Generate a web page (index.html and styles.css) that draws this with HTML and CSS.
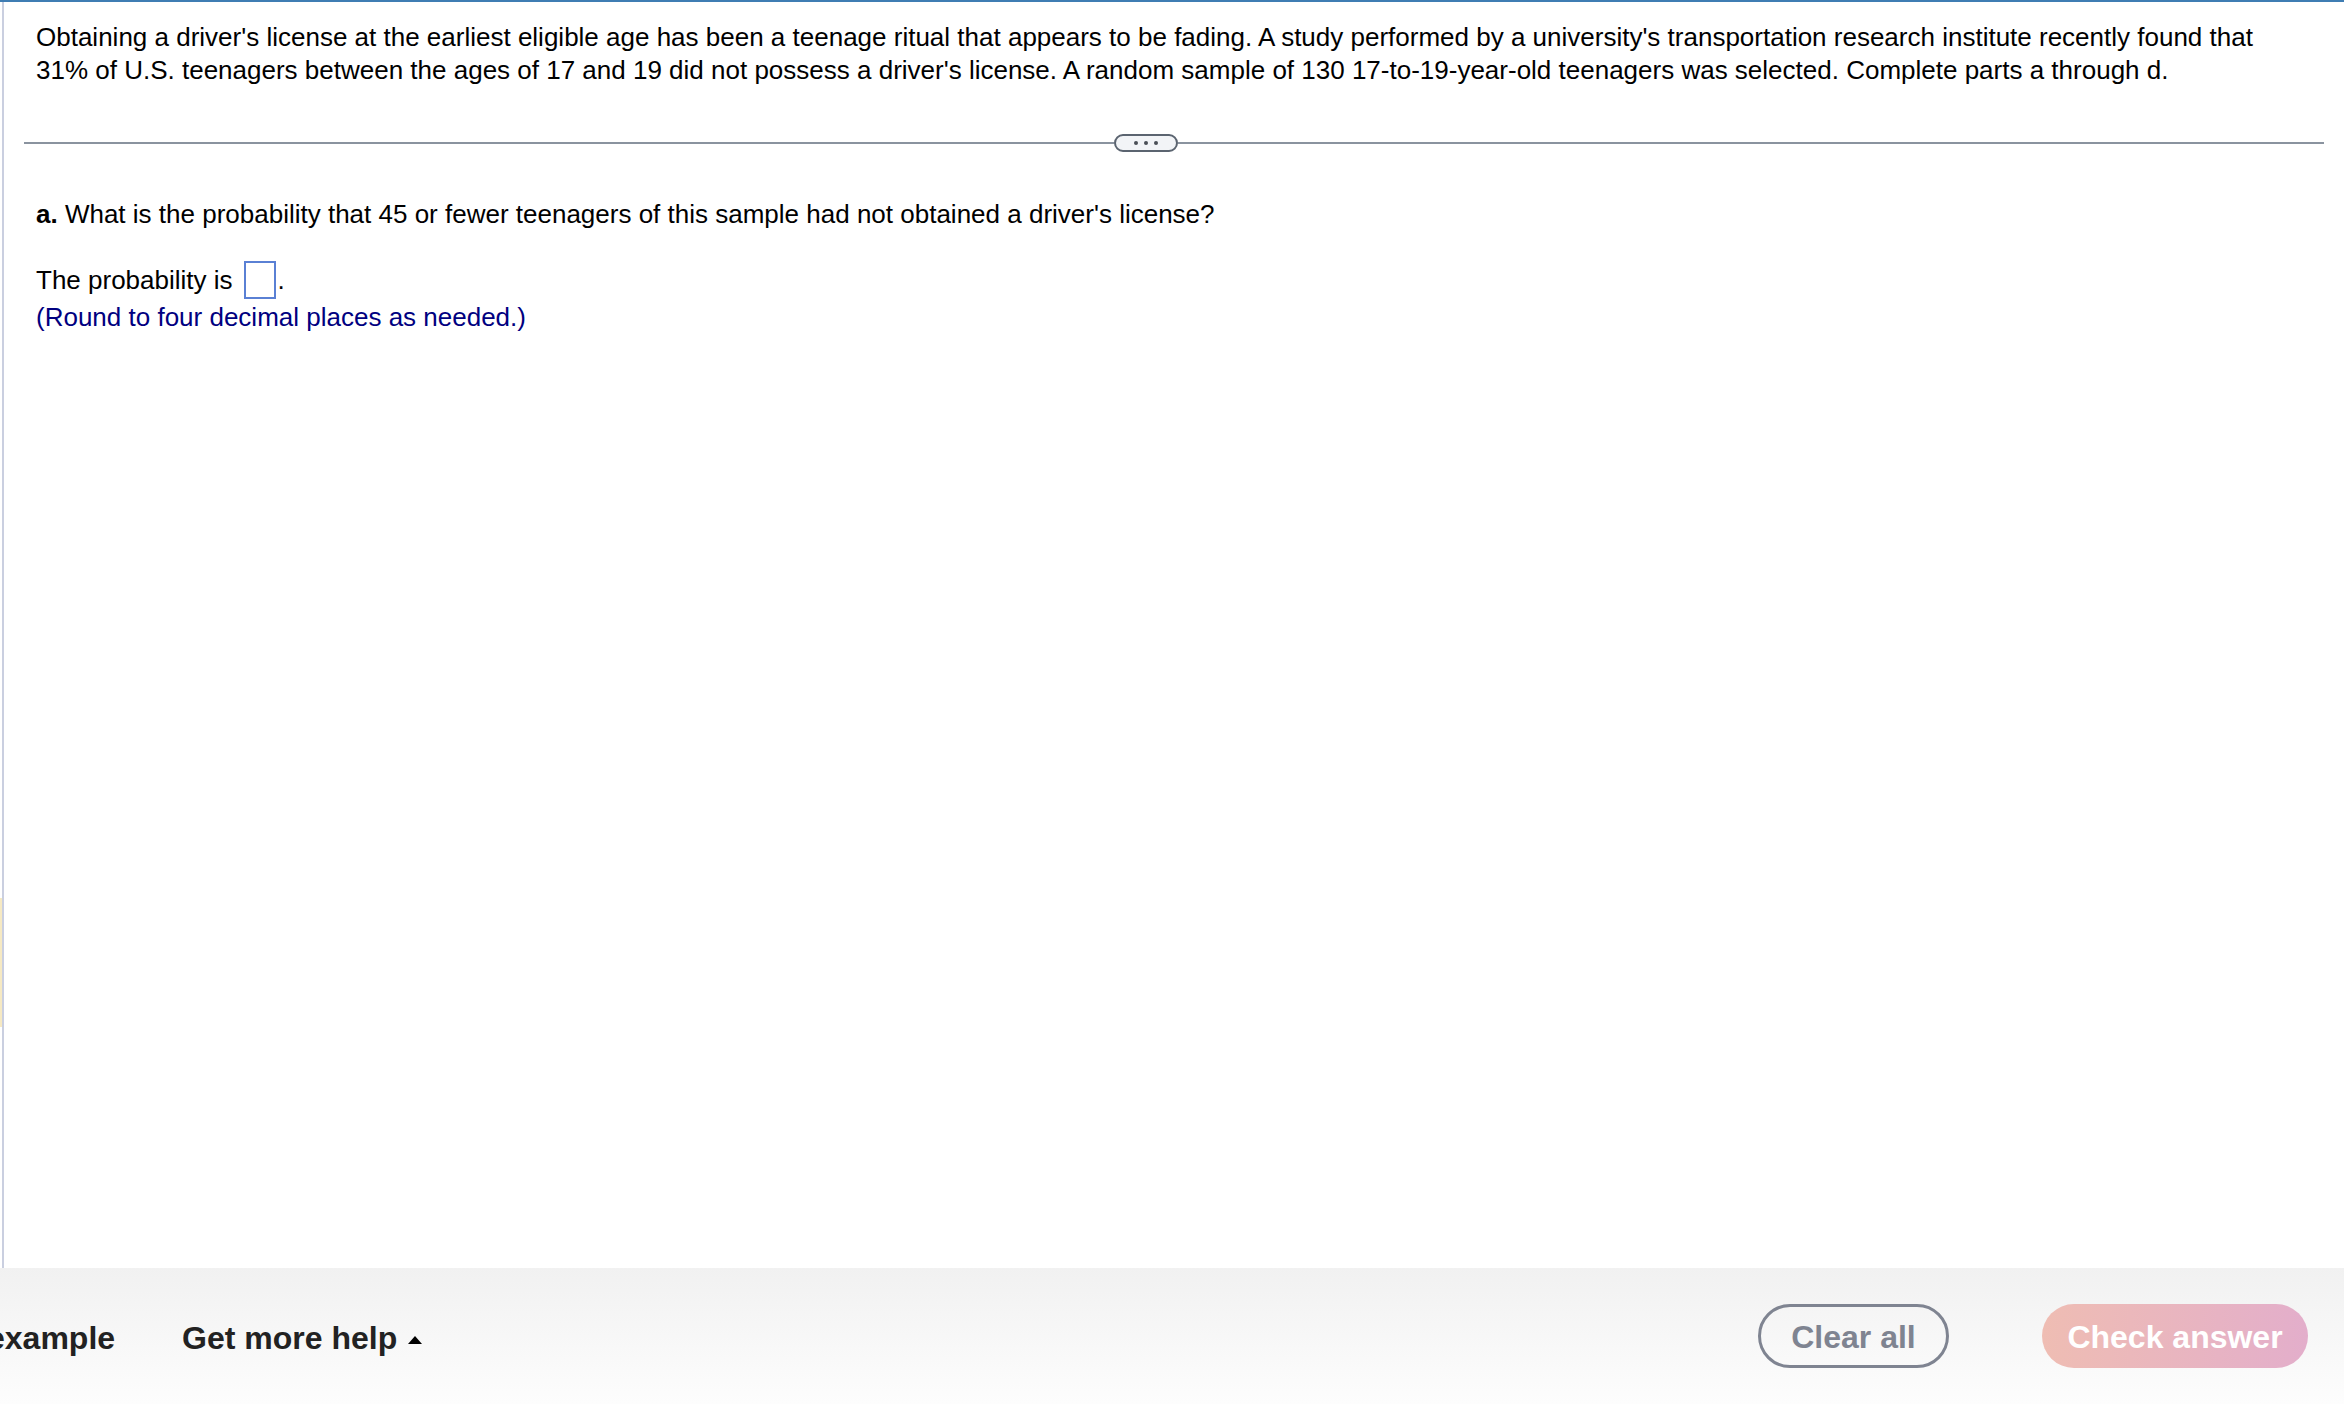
FILE: index.html
```html
<!DOCTYPE html>
<html lang="en">
<head>
<meta charset="utf-8">
<title>Question</title>
<link rel="stylesheet" href="styles.css">
</head>
<body>
<div class="app">
  <div class="topbar"></div>
  <main class="content">
    <div class="yellow-mark"></div>
    <p class="intro">Obtaining a driver's license at the earliest eligible age has been a teenage ritual that appears to be fading. A study performed by a university's transportation research institute recently found that 31% of U.S. teenagers between the ages of 17 and 19 did not possess a driver's license. A random sample of 130 17-to-19-year-old teenagers was selected. Complete parts a through d.</p>
    <div class="divider">
      <span class="rule rule-first"></span>
      <span class="pill"><i></i><i></i><i></i></span>
      <span class="rule rule-rest"></span>
    </div>
    <p class="question"><b>a.</b> What is the probability that 45 or fewer teenagers of this sample had not obtained a driver's license?</p>
    <div class="answer-row"><span>The probability is</span><span class="input-box"></span><span class="dot">.</span></div>
    <p class="hint">(Round to four decimal places as needed.)</p>
  </main>
  <footer class="footer">
    <span class="help-link example">example</span>
    <span class="help-link more">Get more help<span class="tri"></span></span>
    <span class="spacer"></span>
    <span class="btn btn-clear">Clear all</span>
    <span class="btn btn-check">Check answer</span>
  </footer>
</div>
</body>
</html>
```

FILE: styles.css
```css
html, body {
  margin: 0;
  padding: 0;
  height: 100%;
}
body {
  font-family: "Liberation Sans", Arial, Helvetica, sans-serif;
  color: #000;
  background: #fff;
  overflow: hidden;
}
.app {
  display: flex;
  flex-direction: column;
  height: 100vh;
}
.topbar {
  height: 2px;
  background: #3f7db3;
  flex: none;
}
.content {
  flex: 1;
  position: relative;
  margin-left: 2px;
  border-left: 2px solid #cacfe0;
  padding: 19px 50px 0 32px;
  font-size: 26px;
  line-height: 33px;
}
.yellow-mark {
  position: absolute;
  left: -4px;
  top: 896px;
  width: 2px;
  height: 129px;
  background: #f6e9c3;
}
.intro {
  margin: 0;
}
.divider {
  display: flex;
  align-items: center;
  height: 18px;
  margin: 47px -30px 0 -12px;
}
.rule {
  height: 2px;
  background: #8a939f;
}
.rule-first {
  width: 1090px;
  flex: none;
}
.rule-rest {
  flex: 1;
}
.pill {
  flex: none;
  box-sizing: border-box;
  width: 64px;
  height: 18px;
  border: 2px solid #5b6470;
  border-radius: 9px;
  background: #f2f4f7;
  display: flex;
  align-items: center;
  justify-content: center;
  gap: 6px;
}
.pill i {
  width: 4px;
  height: 4px;
  border-radius: 50%;
  background: #4a4f57;
}
.question {
  margin: 46px 0 0;
}
.answer-row {
  display: flex;
  align-items: center;
  height: 38px;
  margin-top: 30px;
}
.input-box {
  box-sizing: border-box;
  width: 32px;
  height: 38px;
  border: 2px solid #5a80d4;
  margin-left: 11px;
}
.dot {
  margin-left: 2px;
}
.hint {
  margin: 2px 0 0;
  color: #000080;
}
.footer {
  flex: none;
  height: 136px;
  display: flex;
  align-items: center;
  padding-right: 36px;
  background: linear-gradient(#f1f1f1, #fdfdfd);
  font-size: 32px;
  font-weight: bold;
}
.help-link {
  color: #222;
  margin-top: 4px;
  white-space: nowrap;
}
.example {
  margin-left: -13px;
}
.more {
  margin-left: 67px;
  display: flex;
  align-items: center;
}
.tri {
  width: 0;
  height: 0;
  border-left: 7px solid transparent;
  border-right: 7px solid transparent;
  border-bottom: 8px solid #000;
  margin-left: 11px;
  margin-top: 4px;
}
.spacer {
  flex: 1;
}
.btn {
  box-sizing: border-box;
  height: 64px;
  border-radius: 32px;
  display: flex;
  align-items: center;
  justify-content: center;
  white-space: nowrap;
  padding-top: 3px;
}
.btn-clear {
  width: 191px;
  border: 3px solid #7f8491;
  color: #7f8491;
}
.btn-check {
  width: 266px;
  margin-left: 93px;
  color: #fff;
  background: linear-gradient(90deg, #efbdb3, #e3aecb);
}
```
